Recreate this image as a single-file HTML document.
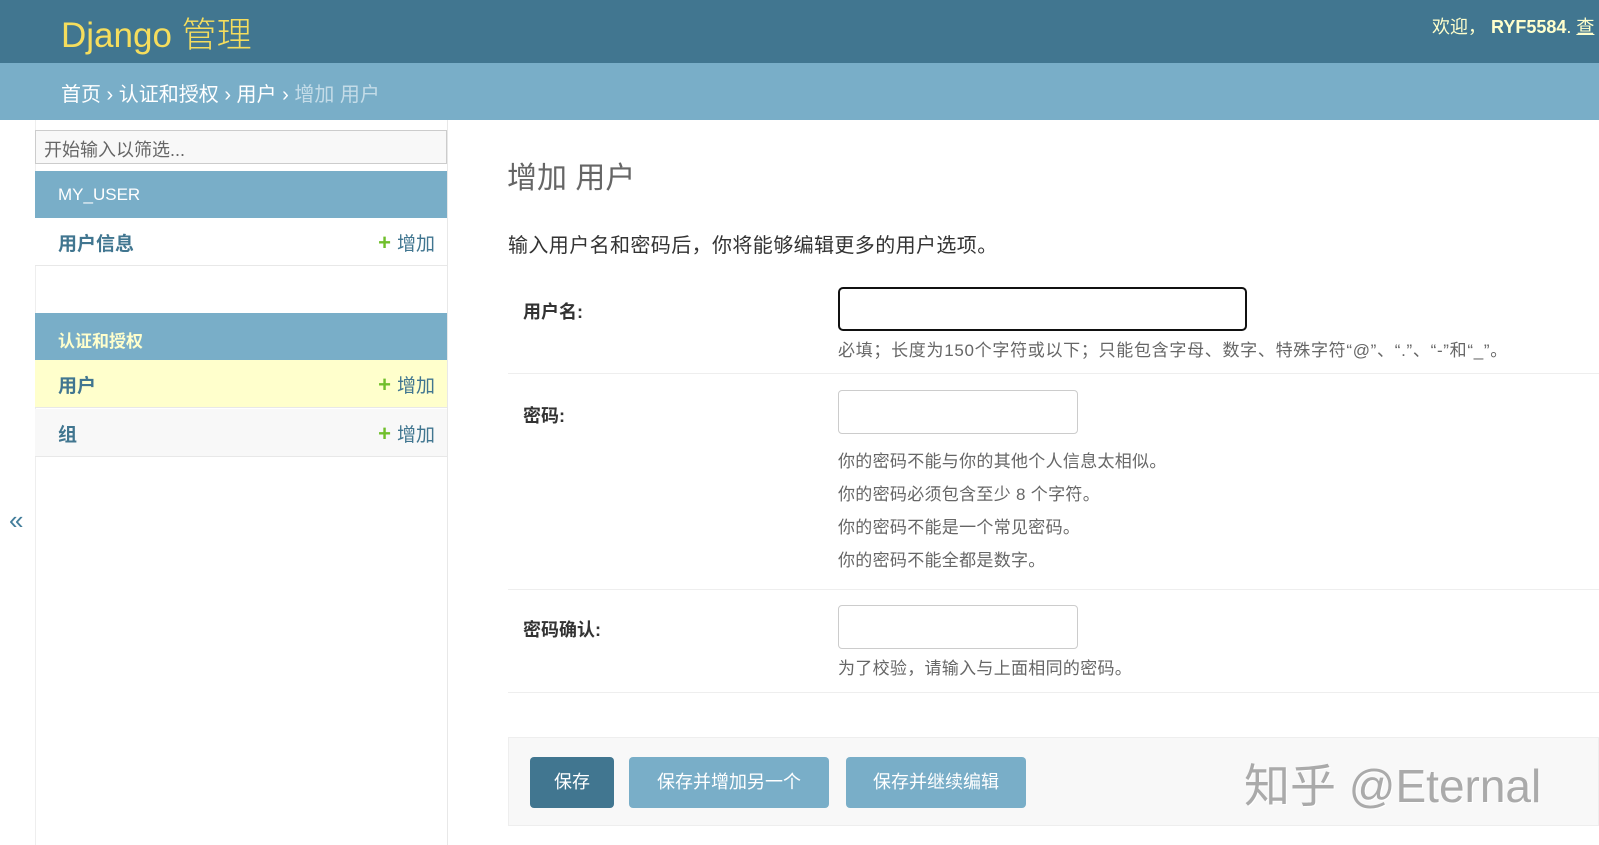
<!DOCTYPE html>
<html><head><meta charset="utf-8"><style>
*{box-sizing:border-box;margin:0;padding:0}
body{width:1599px;height:845px;overflow:hidden;background:#fff;font-family:"Liberation Sans","Noto Sans CJK SC",sans-serif;color:#333;position:relative}
.abs{position:absolute}
#hdr{left:0;top:0;width:1599px;height:63px;background:#417690}
#hdr .t{left:61px;top:7px;font-size:35px;color:#f5dd5d;white-space:nowrap;font-weight:300}
#hdr .u{left:1432px;top:13px;font-size:18px;color:#ffc;white-space:nowrap}
#bc{left:0;top:63px;width:1599px;height:57px;background:#79aec8;font-size:20px;color:#fff;padding:15px 0 0 61px;white-space:nowrap}
#bc span{color:#c4dce8}
#side{left:35px;top:120px;width:413px;height:725px;border-right:1px solid #e8e8e8;border-left:1px solid #eee}
.filter{left:35px;top:130px;width:412px;height:34px;border:1px solid #ccc;background:#f8f8f8;font-size:18px;color:#666;padding:5px 8px}
.cap{left:35px;width:412px;height:47px;background:#79aec8;color:#fff;font-size:17px;padding:14px 23px}
.row{left:35px;width:412px;height:48px;border-bottom:1px solid #e8e8e8;font-size:19px;font-weight:bold;color:#417690;padding:11px 23px}
.row .a{position:absolute;right:12px;top:11px;font-weight:normal;font-size:19px}
.row .a b{color:#70bf2b;font-size:22px;margin-right:6px}
.m{font-size:18px;white-space:nowrap}
.lbl{font-weight:bold;color:#333;font-size:18px;left:523px}
.inp{border:1px solid #ccc;border-radius:4px;left:838px;width:240px;height:44px}
.help{left:838px;color:#666;font-size:17px;white-space:nowrap;letter-spacing:0.3px}
.hr{left:508px;width:1091px;height:1px;background:#eee}
.btn{top:757px;height:51px;border-radius:4px;background:#79aec8;color:#fff;font-size:18px;text-align:center;line-height:51px}
</style></head><body>
<div id="hdr" class="abs"><div class="t abs">Django 管理</div><div class="u abs">欢迎， <b>RYF5584</b>. <u>查</u></div></div>
<div id="bc" class="abs">首页 › 认证和授权 › 用户 › <span>增加 用户</span></div>
<div id="side" class="abs"></div>
<div class="filter abs">开始输入以筛选...</div>
<div class="cap abs" style="top:171px">MY_USER</div>
<div class="row abs" style="top:218px;background:#fff">用户信息<span class="a"><b>+</b>增加</span></div>
<div class="cap abs" style="top:313px;color:#ffc;font-weight:bold">认证和授权</div>
<div class="row abs" style="top:360px;background:#ffc">用户<span class="a"><b>+</b>增加</span></div>
<div class="row abs" style="top:409px;background:#f8f8f8">组<span class="a"><b>+</b>增加</span></div>
<div class="abs" style="left:9px;top:505px;font-size:26px;color:#447e9b">«</div>

<div class="abs" style="left:507px;top:153px;font-size:30px;color:#666">增加 用户</div>
<div class="abs m" style="left:508px;top:229px;font-size:20px;letter-spacing:0.4px">输入用户名和密码后，你将能够编辑更多的用户选项。</div>

<div class="abs lbl" style="top:298px">用户名:</div>
<div class="abs inp" style="top:287px;width:409px;border:2px solid #111;border-radius:5px"></div>
<div class="abs help" style="top:336px;letter-spacing:0.7px">必填；长度为150个字符或以下；只能包含字母、数字、特殊字符“@”、“.”、“-”和“_”。</div>
<div class="abs hr" style="top:373px"></div>

<div class="abs lbl" style="top:402px">密码:</div>
<div class="abs inp" style="top:390px"></div>
<div class="abs help" style="top:447px">你的密码不能与你的其他个人信息太相似。</div>
<div class="abs help" style="top:480px">你的密码必须包含至少 8 个字符。</div>
<div class="abs help" style="top:513px">你的密码不能是一个常见密码。</div>
<div class="abs help" style="top:546px">你的密码不能全都是数字。</div>
<div class="abs hr" style="top:589px"></div>

<div class="abs lbl" style="top:616px">密码确认:</div>
<div class="abs inp" style="top:605px"></div>
<div class="abs help" style="top:654px">为了校验，请输入与上面相同的密码。</div>
<div class="abs hr" style="top:692px"></div>

<div class="abs" style="left:508px;top:737px;width:1091px;height:89px;background:#f8f8f8;border:1px solid #eee"></div>
<div class="abs btn" style="left:530px;width:84px;background:#417690">保存</div>
<div class="abs btn" style="left:629px;width:200px">保存并增加另一个</div>
<div class="abs btn" style="left:846px;width:180px">保存并继续编辑</div>
<div class="abs" style="left:1244px;top:750px;font-size:46px;color:#aaa;white-space:nowrap;text-shadow:1px 1px 0 #fff">知乎 @Eternal</div>
</body></html>
